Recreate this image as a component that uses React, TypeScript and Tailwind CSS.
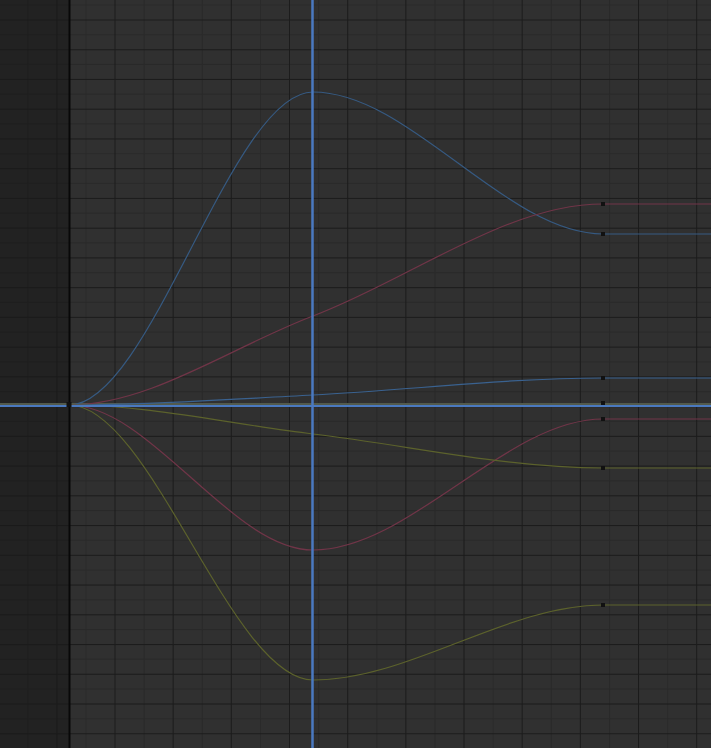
import React from "react";

const W = 711;
const H = 748;

function seg(x0: number, y0: number, x1: number, y1: number, x2: number, y2: number, s1: number) {
  const d1 = (x1 - x0) / 3;
  const d2 = (x2 - x1) / 3;
  return `M ${x0} ${y0} C ${x0 + d1} ${y0}, ${x1 - d1} ${y1 - s1 * d1}, ${x1} ${y1} C ${x1 + d2} ${y1 + s1 * d2}, ${x2 - d2} ${y2}, ${x2} ${y2} L ${W} ${y2}`;
}

const K0 = 69;
const K1 = 313;
const K2 = 603;
const Y0 = 405;

const curves = [
  { y1: 92, y2: 234, s: 0, c: "#365a82" },
  { y1: 316, y2: 204, s: (204 - 405) / 534, c: "#713548" },
  { y1: 395, y2: 378, s: (378 - 405) / 534, c: "#3a6290" },
  { y1: 550, y2: 419, s: 0, c: "#713548" },
  { y1: 434, y2: 468, s: (468 - 405) / 534, c: "#5c622c" },
  { y1: 680, y2: 605, s: 0, c: "#5c622c" },
];

export default function App() {
  const majorX: number[] = [];
  const minorX: number[] = [];
  for (let k = -1; k < 12; k++) {
    majorX.push(115 + 58.17 * k);
    minorX.push(86 + 58.17 * k);
  }
  const majorY: number[] = [];
  const minorY: number[] = [];
  for (let k = 0; k < 26; k++) {
    majorY.push(20 + 29.74 * k);
    minorY.push(5 + 29.74 * k);
  }
  return (
    <div className="relative w-[711px] h-[748px] overflow-hidden bg-[#303030] flex">
      <div className="w-[69px] h-full bg-[#222222]" />
      <div className="flex-1 h-full bg-[#303030]" />
      <svg className="absolute inset-0" width={W} height={H} viewBox={`0 0 ${W} ${H}`}>
        {minorX.map((x, i) => (
          <line key={"mx" + i} x1={x} y1={0} x2={x} y2={H} stroke={x < 69 ? "#1f1f1f" : "#2a2a2a"} strokeWidth={1} />
        ))}
        {minorY.map((y, i) => (
          <g key={"my" + i}>
            <line x1={0} y1={y} x2={69} y2={y} stroke="#1f1f1f" strokeWidth={1} />
            <line x1={69} y1={y} x2={W} y2={y} stroke="#2a2a2a" strokeWidth={1} />
          </g>
        ))}
        {majorX.map((x, i) => (
          <line key={"Mx" + i} x1={x} y1={0} x2={x} y2={H} stroke={x < 69 ? "#1b1b1b" : "#1c1c1c"} strokeWidth={1} />
        ))}
        {majorY.map((y, i) => (
          <g key={"My" + i}>
            <line x1={0} y1={y} x2={69} y2={y} stroke="#1b1b1b" strokeWidth={1} />
            <line x1={69} y1={y} x2={W} y2={y} stroke="#1c1c1c" strokeWidth={1} />
          </g>
        ))}
        <line x1={69.5} y1={0} x2={69.5} y2={H} stroke="#080808" strokeWidth={2} />
        <line x1={0} y1={404} x2={W} y2={404} stroke="#535a4c" strokeWidth={2} />
        {curves.map((c, i) => (
          <path key={"c" + i} d={seg(K0, Y0, K1, c.y1, K2, c.y2, c.s)} fill="none" stroke={c.c} strokeWidth={1.2} />
        ))}
        <line x1={0} y1={406} x2={W} y2={406} stroke="#4a79c0" strokeWidth={2} />
        <line x1={312.5} y1={0} x2={312.5} y2={H} stroke="#4a79c0" strokeWidth={2.5} />
        {[234, 204, 378, 403, 419, 468, 605].map((y, i) => (
          <rect key={"k" + i} x={K2 - 2} y={y - 2} width={4} height={4} fill="#111111" />
        ))}
        <rect x={K0 - 2.5} y={402} width={5} height={5} fill="#111111" />
      </svg>
    </div>
  );
}
